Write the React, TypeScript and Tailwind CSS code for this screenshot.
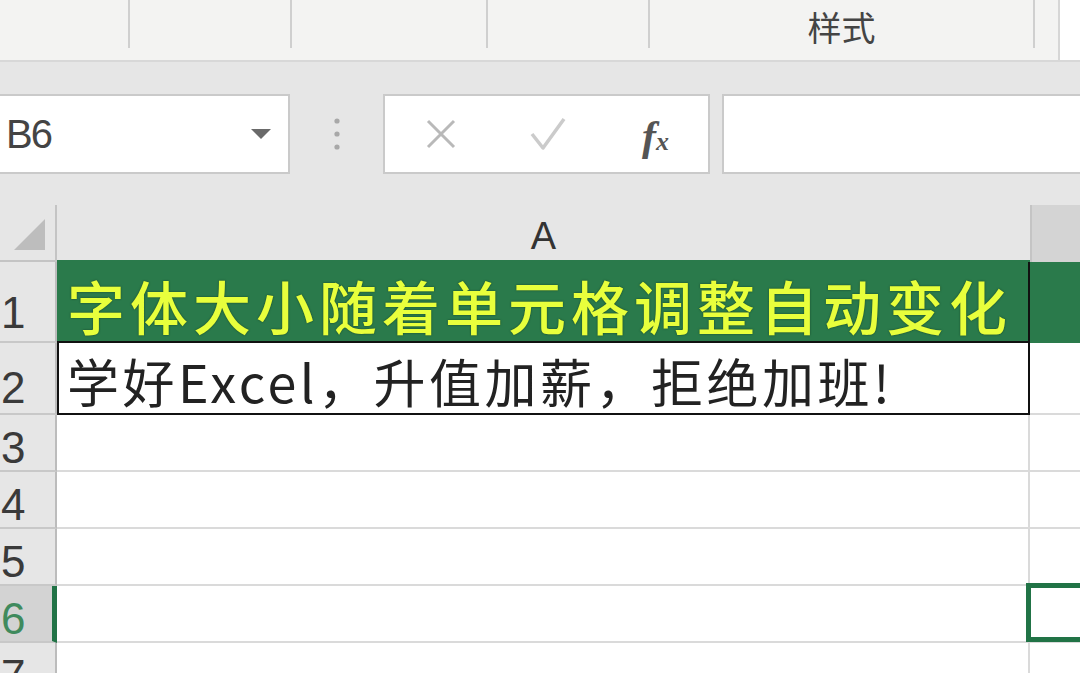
import React from 'react';

const rows = [
  { n: 1, h: 'h-[81px]', pad: 'pt-[22px]' },
  { n: 2, h: 'h-[72px]', pad: 'pt-[20px]' },
  { n: 3, h: 'h-[57px]', pad: 'pt-[10px]' },
  { n: 4, h: 'h-[57px]', pad: 'pt-[10px]' },
  { n: 5, h: 'h-[57px]', pad: 'pt-[10px]' },
  { n: 6, h: 'h-[57px]', pad: 'pt-[10px]' },
  { n: 7, h: 'h-[57px]', pad: 'pt-[10px]' },
];

function Ribbon() {
  // group widths approximated from the screenshot
  const groups = ['w-[130px]', 'w-[162px]', 'w-[196px]', 'w-[162px]'];
  return (
    <div className="flex h-[62px] bg-[#f3f3f2] border-b-2 border-[#d8d8d8]">
      {groups.map((w, i) => (
        <div key={i} className={`${w} h-[48px] border-r-2 border-[#cfcfcf]`} />
      ))}
      <div className="w-[385px] h-[48px] border-r-2 border-[#cfcfcf] flex items-center justify-center pt-[6px]">
        <span className="text-[34px] text-[#444] font-['Noto_Sans_CJK_SC',sans-serif] leading-none">样式</span>
      </div>
      <div className="w-[23px]" />
      <div className="flex-1 h-[60px] bg-white border-l-2 border-[#d6d6d6]" />
    </div>
  );
}

function FormulaBar() {
  return (
    <div className="h-[143px] bg-[#e6e6e6] pt-[32px] flex items-start">
      <div className="w-[290px] h-[80px] bg-white border-2 border-l-0 border-[#cacaca] flex items-center justify-between pl-[6px] pr-[16px]">
        <span className="text-[40px] leading-none text-[#444] font-['Liberation_Sans',sans-serif] tracking-[-2px]">B6</span>
        <svg width="22" height="12" viewBox="0 0 22 12">
          <path d="M1 1 L21 1 L11 11 Z" fill="#6a6a6a" />
        </svg>
      </div>
      <div className="w-[93px] h-[80px] flex items-center justify-center">
        <svg width="8" height="36" viewBox="0 0 8 36">
          <circle cx="4" cy="5" r="2.6" fill="#a8a8a8" />
          <circle cx="4" cy="18" r="2.6" fill="#a8a8a8" />
          <circle cx="4" cy="31" r="2.6" fill="#a8a8a8" />
        </svg>
      </div>
      <div className="w-[327px] h-[80px] bg-white border-2 border-[#cacaca] flex items-center">
        <div className="w-[108px] flex justify-center pl-[4px]">
          <svg width="32" height="32" viewBox="0 0 32 32">
            <path d="M3 3 L29 29 M29 3 L3 29" stroke="#b9b9b9" strokeWidth="3" fill="none" />
          </svg>
        </div>
        <div className="w-[110px] flex justify-center">
          <svg width="36" height="36" viewBox="0 0 36 36">
            <path d="M2 18 L13 32 L34 3" stroke="#cbcbcb" strokeWidth="3.5" fill="none" strokeLinejoin="round" />
          </svg>
        </div>
        <div className="flex-1 flex justify-center pt-[4px]">
          <span className="font-['Liberation_Serif',serif] italic font-bold text-[42px] leading-none text-[#555]">
            f<span className="text-[26px]">x</span>
          </span>
        </div>
      </div>
      <div className="w-[12px]" />
      <div className="flex-1 h-[80px] bg-white border-2 border-r-0 border-[#cacaca]" />
    </div>
  );
}

function ColumnHeader() {
  return (
    <div className="flex h-[57px]">
      <div className="w-[57px] h-full border-r-2 border-b-2 border-[#c4c4c4] bg-[#e6e6e6] flex items-end justify-end pr-[10px] pb-[10px]">
        <svg width="31" height="31" viewBox="0 0 31 31">
          <path d="M31 0 L31 31 L0 31 Z" fill="#bdbdbd" />
        </svg>
      </div>
      <div className="w-[973px] h-full bg-[#e6e6e6] border-b-2 border-[#2a7a4b] flex items-center justify-center pt-[6px]">
        <span className="text-[38px] leading-none text-[#333] font-['Liberation_Sans',sans-serif]">A</span>
      </div>
      <div className="flex-1 h-full bg-[#d4d4d4] border-l-2 border-[#c4c4c4]" />
    </div>
  );
}

function Grid() {
  return (
    <div className="flex flex-col">
      <ColumnHeader />
      {rows.map((r) => {
        const sel = r.n === 6;
        return (
          <div key={r.n} className={`flex ${r.h}`}>
            <div
              className={`w-[57px] h-full border-b-2 border-[#c8c8c8] flex items-center pl-[1px] ${r.pad} ${
                sel ? 'bg-[#d3d3d3] border-r-[5px] border-r-[#217346] text-[#3f8a5d]' : 'bg-[#e6e6e6] border-r-2 border-r-[#bcbcbc] text-[#3a3a3a]'
              }`}
            >
              <span className="text-[44px] leading-none font-['Liberation_Sans',sans-serif]">{r.n}</span>
            </div>
            {r.n === 1 && (
              <>
                <div className="w-[973px] h-full bg-[#2a7a4b] border-r-2 border-b-2 border-[#111] flex items-center pl-[10px] pt-[6px]">
                  <span className="text-[58px] leading-none font-medium tracking-[5px] text-[#e8ff3c] font-['Noto_Sans_CJK_SC',sans-serif] [text-shadow:0_0_2px_#143d22]">
                    字体大小随着单元格调整自动变化
                  </span>
                </div>
                <div className="flex-1 h-full bg-[#2a7a4b]" />
              </>
            )}
            {r.n === 2 && (
              <>
                <div className="w-[973px] h-full bg-white border-l-2 border-r-2 border-b-2 border-[#111] flex items-center pl-[8px] pt-[6px]">
                  <span className="text-[52px] leading-none tracking-[3.5px] text-[#222] font-['Noto_Sans_CJK_SC',sans-serif]">
                    学好Excel，升值加薪，拒绝加班!
                  </span>
                </div>
                <div className="flex-1 h-full bg-white border-b-2 border-[#dadada]" />
              </>
            )}
            {r.n > 2 && (
              <>
                <div className="w-[973px] h-full bg-white border-b-2 border-r-2 border-[#dadada]" />
                <div className="flex-1 h-full bg-white border-b-2 border-[#dadada] relative">
                  {sel && <div className="absolute -left-[4px] -top-[3px] -right-[10px] -bottom-[1px] border-[5px] border-[#217346]" />}
                </div>
              </>
            )}
          </div>
        );
      })}
    </div>
  );
}

export default function App() {
  return (
    <div className="w-[1080px] h-[673px] overflow-hidden bg-white">
      <Ribbon />
      <FormulaBar />
      <Grid />
    </div>
  );
}
